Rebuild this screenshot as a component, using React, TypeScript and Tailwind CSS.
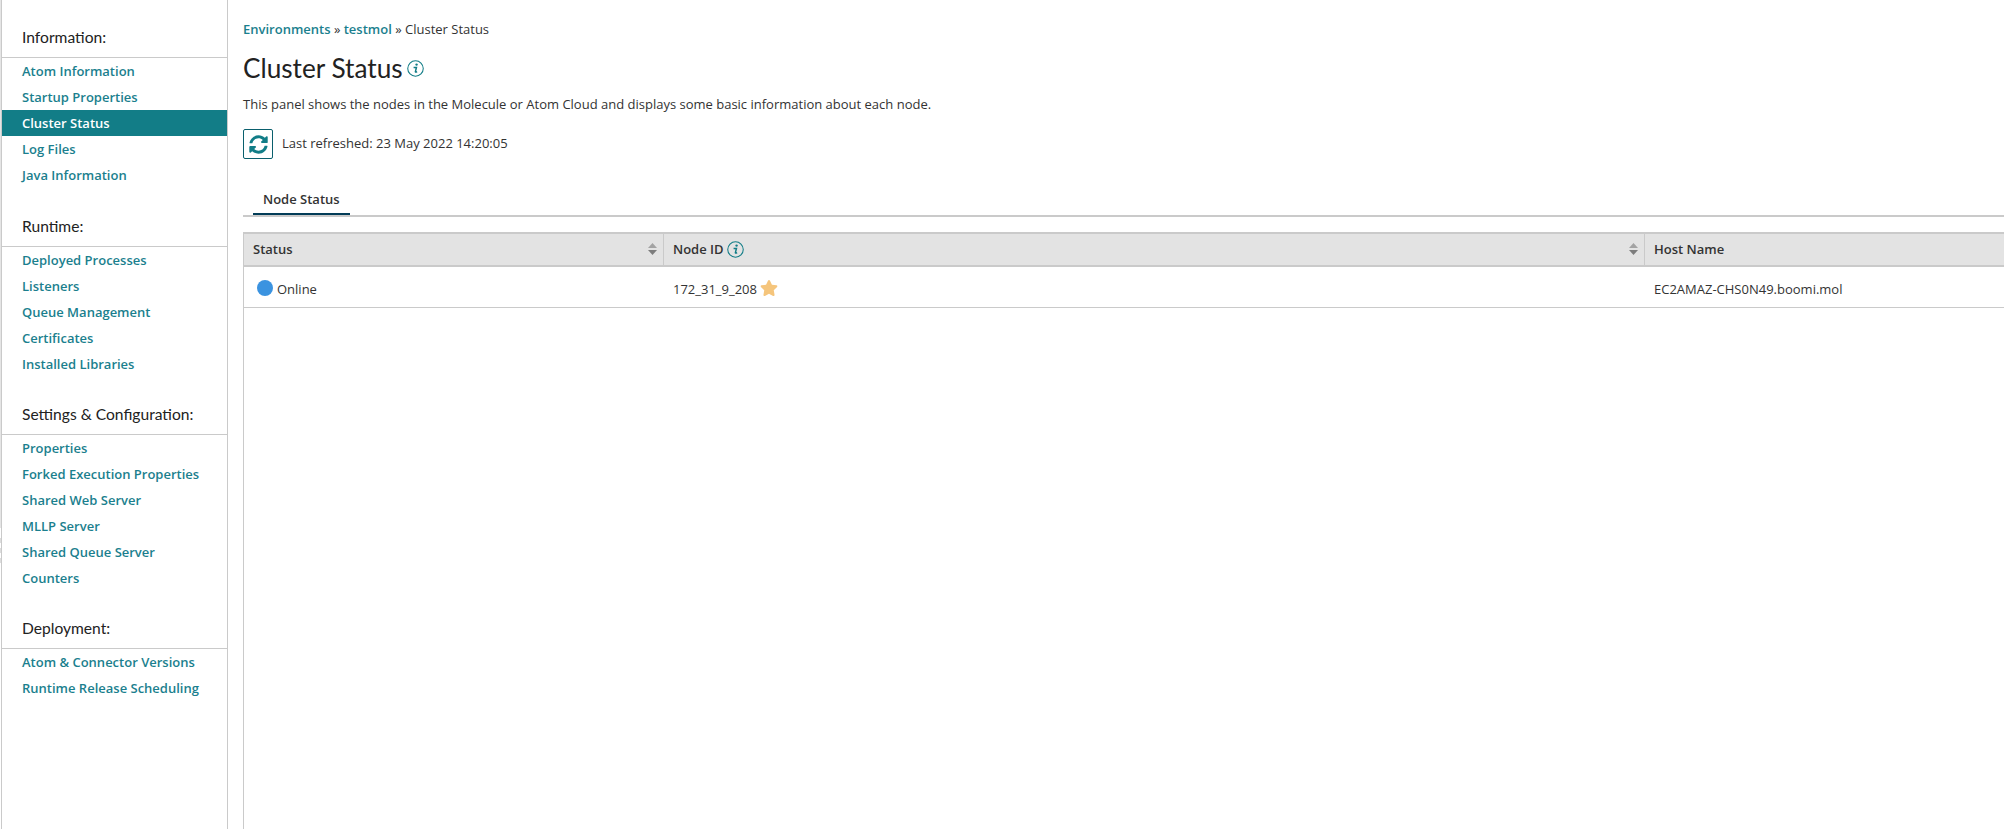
import React from 'react';
import { FaStar, FaSyncAlt } from 'react-icons/fa';

const sections = [
  { title: 'Information:', items: ['Atom Information', 'Startup Properties', 'Cluster Status', 'Log Files', 'Java Information'] },
  { title: 'Runtime:', items: ['Deployed Processes', 'Listeners', 'Queue Management', 'Certificates', 'Installed Libraries'] },
  { title: 'Settings & Configuration:', items: ['Properties', 'Forked Execution Properties', 'Shared Web Server', 'MLLP Server', 'Shared Queue Server', 'Counters'] },
  { title: 'Deployment:', items: ['Atom & Connector Versions', 'Runtime Release Scheduling'] },
];

const InfoIcon: React.FC<{ size: number }> = ({ size }) => (
  <svg width={size} height={size} viewBox="0 0 16 16" className="shrink-0">
    <circle cx="8" cy="8" r="7.3" fill="none" stroke="#127d87" strokeWidth="1" />
    <circle cx="9" cy="4.3" r="1.1" fill="#127d87" />
    <path d="M6.2 7.1h2.7l-1 3.9c-.1.5.5.6 1.6-.1" fill="none" stroke="#127d87" strokeWidth="1.4" />
  </svg>
);

const SortIcon: React.FC = () => (
  <svg width="9" height="12" viewBox="0 0 9 12" className="shrink-0 -mt-[2px]">
    <path d="M4.5 0L9 5H0z" fill="#a3a3a3" />
    <path d="M4.5 12L0 7H9z" fill="#7d7d7d" />
  </svg>
);

const App: React.FC = () => {
  return (
    <div className="h-[829px] w-[2004px] overflow-hidden bg-white flex text-[13px] text-[#333] font-['Open_Sans','Noto_Sans',sans-serif]">
      {/* Splitter strip at the far left */}
      <div className="w-[1px] shrink-0 flex flex-col">
        <div className="h-[528px] bg-[#e5e5e5]" />
        <div className="mt-[10px] h-[5px] bg-[#dddddd]" />
        <div className="mt-[5px] h-[5px] bg-[#dddddd]" />
        <div className="mt-[5px] h-[5px] bg-[#dddddd]" />
      </div>

      {/* Left nav */}
      <aside className="w-[227px] shrink-0 h-full border-l border-r border-[#cacaca] pt-[27px]">
        {sections.map(section => (
          <div key={section.title} className="mb-[27px] first:mb-[28px]">
            <h3 className="pl-[20px] h-[30px] text-[15.6px] leading-[20px] text-[#222] font-['Lato','Noto_Sans',sans-serif] border-b border-[#cacaca] box-content">
              {section.title}
            </h3>
            <ul>
              {section.items.map(item => (
                <li
                  key={item}
                  className={`pl-[20px] h-[26px] leading-[26px] font-semibold ${item === 'Cluster Status' ? 'bg-[#127d87] text-white' : 'text-[#1b7f8e]'}`}
                >
                  {item}
                </li>
              ))}
            </ul>
          </div>
        ))}
      </aside>

      {/* Main */}
      <main className="flex-1 min-w-0 pl-[15px] flex flex-col">
        <div className="pt-[20px] h-[38px] leading-[18px]">
          <span className="font-semibold text-[#1b7f8e]">Environments</span> » <span className="font-semibold text-[#1b7f8e]">testmol</span> » Cluster Status
        </div>

        <div className="flex items-center gap-[4px] mt-[15px] h-[30px]">
          <h1 className="text-[26.2px] leading-[30px] text-[#222] font-['Lato','Noto_Sans',sans-serif]">Cluster Status</h1>
          <InfoIcon size={17} />
        </div>

        <p className="mt-[12px] leading-[18px]">This panel shows the nodes in the Molecule or Atom Cloud and displays some basic information about each node.</p>

        <div className="flex items-center gap-[9px] mt-[16px]">
          <button className="w-[30px] h-[30px] rounded-[2px] border border-[#0a5f6d] flex items-center justify-center text-[#127d87]">
            <FaSyncAlt size={19} />
          </button>
          <span>Last refreshed: 23 May 2022 14:20:05</span>
        </div>

        <div className="mt-[26px] border-b-2 border-[#cacaca] h-[32px] pl-[10px] flex">
          <div className="px-[10px] h-[30px] leading-[28px] font-semibold text-[#333] border-b-2 border-[#033d58] box-border">Node Status</div>
        </div>

        {/* Node table */}
        <div className="mt-[15px] flex-1 border-l border-[#cacaca]">
          <div className="flex h-[35px] bg-[#e3e3e3] border-t-2 border-l border-b-2 border-[#cacaca] font-semibold -ml-[1px]">
            <div className="w-[420px] shrink-0 pl-[9px] pr-[6px] flex items-center justify-between border-r border-[#cacaca]">
              <span>Status</span>
              <SortIcon />
            </div>
            <div className="w-[981px] shrink-0 pl-[9px] pr-[6px] flex items-center justify-between border-r border-[#cacaca]">
              <span className="flex items-center gap-[3px]">Node ID <InfoIcon size={17} /></span>
              <SortIcon />
            </div>
            <div className="flex-1 pl-[9px] flex items-center">Host Name</div>
          </div>
          <div className="flex h-[41px] pt-[5px] border-b border-[#cacaca] items-center">
            <div className="w-[420px] shrink-0 pl-[13px] flex items-center gap-[4px]">
              <span className="w-[16px] h-[16px] rounded-full bg-[#3b93e0] -mt-[3px]" />
              <span>Online</span>
            </div>
            <div className="w-[981px] shrink-0 pl-[9px] flex items-center gap-[3px]">
              <span>172_31_9_208</span>
              <FaStar size={18} className="text-[#f5c57c] -mt-[4px]" />
            </div>
            <div className="flex-1 pl-[9px]">EC2AMAZ-CHS0N49.boomi.mol</div>
          </div>
        </div>
      </main>
    </div>
  );
};

export default App;
